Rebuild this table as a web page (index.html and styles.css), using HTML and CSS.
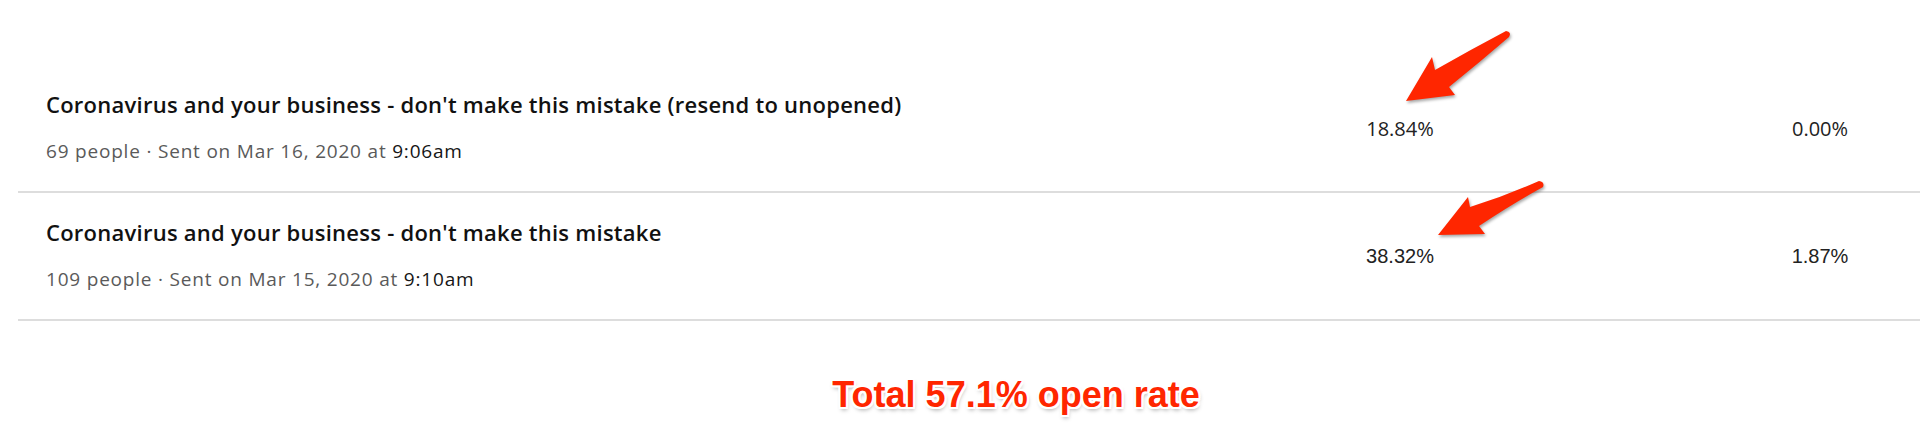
FILE: index.html
```html
<!DOCTYPE html>
<html lang="en">
<head>
<meta charset="utf-8">
<title>Campaign report</title>
<link rel="stylesheet" href="styles.css">
</head>
<body>
<div class="page">
  <div class="list">
    <div class="row">
      <div class="name">
        <div class="title">Coronavirus and your business - don't make this mistake (resend to unopened)</div>
        <div class="meta">69 people · Sent on Mar 16, 2020 at <span class="time">9:06am</span></div>
      </div>
      <div class="stat geo">18.84%</div>
      <div class="stat geo">0.00%</div>
    </div>
    <div class="row">
      <div class="name">
        <div class="title">Coronavirus and your business - don't make this mistake</div>
        <div class="meta">109 people · Sent on Mar 15, 2020 at <span class="time">9:10am</span></div>
      </div>
      <div class="stat helv">38.32%</div>
      <div class="stat helv">1.87%</div>
    </div>
  </div>
  <div class="note">Total 57.1% open rate</div>
  <svg class="arrows" width="1920" height="428" viewBox="0 0 1920 428" aria-hidden="true">
    <path d="M1406,101 L1455,95 L1449,87 Q1480,62 1509,37 Q1512,32 1506,31 Q1470,50 1435,70 L1432,57 Z"/>
    <path d="M1438,235 L1485,234 L1479,226 Q1512,204 1543,187 Q1545,182 1539,181 Q1505,196 1470,207 L1468,197 Z"/>
  </svg>
</div>
</body>
</html>
```
FILE: styles.css
```css
html, body {
  margin: 0;
  padding: 0;
  background: #ffffff;
}
body {
  width: 1920px;
  height: 428px;
  overflow: hidden;
}
.page {
  position: relative;
  width: 1920px;
  height: 428px;
  padding-top: 65px;
  box-sizing: border-box;
}
.list {
  margin-left: 18px;
}
.row {
  display: grid;
  grid-template-columns: 1fr 180px 200px;
  column-gap: 230px;
  align-items: center;
  height: 128px;
  box-sizing: border-box;
  padding-left: 28px;
  border-bottom: 2px solid #dddddd;
}
.name {
  display: flex;
  flex-direction: column;
  gap: 20px;
  padding-bottom: 2px;
  font-family: "Open Sans", "Liberation Sans", sans-serif;
}
.title {
  font-size: 22px;
  line-height: 28px;
  font-weight: 600;
  letter-spacing: 0.25px;
  color: #111111;
}
.meta {
  font-size: 19px;
  line-height: 26px;
  letter-spacing: 0.8px;
  color: #5a5a5a;
}
.time {
  color: #151515;
}
.stat {
  text-align: center;
  color: #222222;
  font-size: 20px;
}
.geo {
  font-family: "Open Sans", "Liberation Sans", sans-serif;
}
.helv {
  font-family: "Liberation Sans", Arial, sans-serif;
}
.note {
  margin-top: 52px;
  padding-left: 112px;
  text-align: center;
  font-family: "Liberation Sans", Arial, sans-serif;
  font-weight: 700;
  font-size: 36px;
  line-height: 44px;
  color: #ff2600;
  text-shadow: 2px 0 0 #fff, -2px 0 0 #fff, 0 2px 0 #fff, 0 -2px 0 #fff,
    2px 2px 0 #fff, -2px -2px 0 #fff, 2px -2px 0 #fff, -2px 2px 0 #fff,
    1px 3px 4px rgba(0, 0, 0, 0.35);
}
.arrows {
  position: absolute;
  left: 0;
  top: 0;
  pointer-events: none;
  fill: #ff2600;
  filter: drop-shadow(1px 2px 1.5px rgba(0, 0, 0, 0.35));
}
```
